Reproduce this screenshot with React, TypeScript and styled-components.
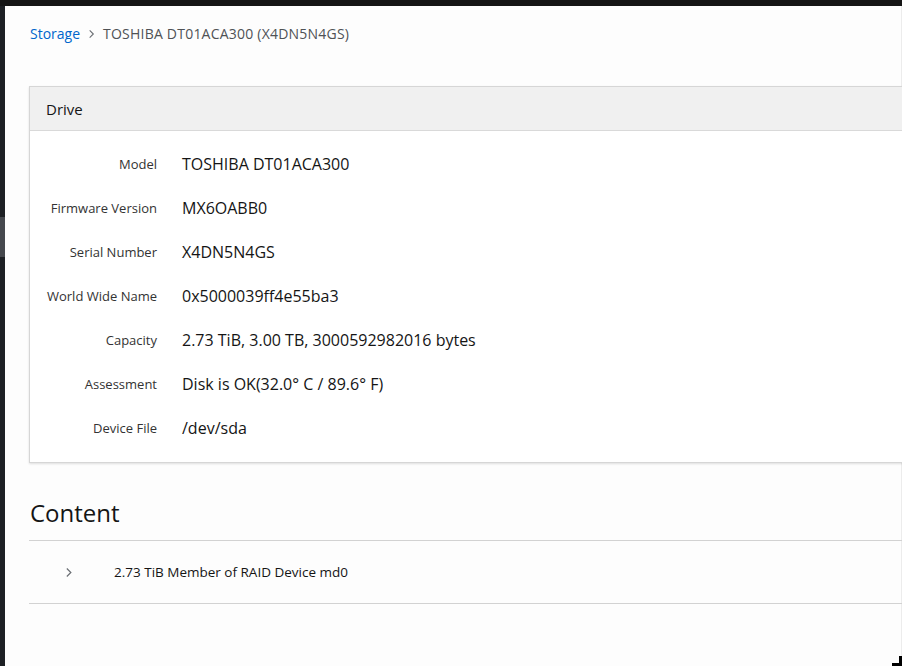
import React from 'react';
import styled, { createGlobalStyle } from 'styled-components';

const GlobalStyle = createGlobalStyle`
  html, body {
    margin: 0;
    padding: 0;
    background: #fdfdfd;
    overflow: hidden;
  }
  body {
    font-family: "Open Sans", "Liberation Sans", sans-serif;
    color: #151515;
  }
`;

// Styled components
const Window = styled.div`
  position: relative;
  width: 902px;
  height: 666px;
  display: flex;
  flex-direction: column;
  overflow: hidden;
`;

const TopStrip = styled.div`
  height: 6px;
  background: #151515;
  flex: none;
`;

const Body = styled.div`
  flex: 1;
  display: flex;
  min-height: 0;
`;

const Rail = styled.div`
  width: 5px;
  flex: none;
  background: #1d2024;
  display: flex;
  flex-direction: column;
  padding-top: 211px;
`;

const RailMark = styled.div`
  height: 40px;
  background: #45484d;
`;

const Main = styled.main`
  flex: 1;
  min-width: 0;
  padding: 17px 0 0 24px;
  border-right: 1px solid #ececec;
`;

const Breadcrumb = styled.nav`
  display: flex;
  align-items: center;
  gap: 8px;
  font-size: 14px;
  line-height: 21px;
  padding-left: 1px;
`;

const CrumbLink = styled.a`
  color: #0066cc;
  text-decoration: none;
`;

const CrumbCurrent = styled.span`
  color: #4f5255;
  letter-spacing: 0.22px;
`;

const CrumbSep = styled.span`
  display: flex;
  color: #6a6e73;
`;

const Card = styled.section`
  margin-top: 42px;
  width: 900px;
  background: #fff;
  border: 1px solid #d6d6d6;
  box-shadow: 0 1px 2px rgba(0, 0, 0, 0.12);
`;

const CardHeader = styled.header`
  height: 43px;
  display: flex;
  align-items: center;
  padding-left: 16px;
  background: #f0f0f0;
  border-bottom: 1px solid #d9d9d9;
  font-size: 15px;
  color: #151515;
`;

const DetailList = styled.dl`
  margin: 0;
  padding: 11px 0 12px;
  display: grid;
  grid-template-columns: 127px 1fr;
  grid-auto-rows: 44px;
  column-gap: 25px;
`;

const Term = styled.dt`
  display: flex;
  align-items: center;
  justify-content: flex-end;
  font-size: 13px;
  color: #333;
`;

const Desc = styled.dd`
  margin: 0;
  display: flex;
  align-items: center;
  font-size: 16px;
  color: #151515;
`;

const SectionTitle = styled.h2`
  margin: 32px 0 0 1px;
  font-size: 24px;
  font-weight: 500;
  line-height: 36px;
  color: #151515;
`;

const ContentTable = styled.div`
  margin-top: 9px;
  width: 900px;
  border-top: 1px solid #d2d2d2;
`;

const ContentRow = styled.div`
  height: 62px;
  display: flex;
  align-items: center;
  border-bottom: 1px solid #d2d2d2;
  font-size: 13.5px;
  color: #151515;
`;

const Toggle = styled.span`
  width: 85px;
  flex: none;
  display: flex;
  padding-left: 36px;
  box-sizing: border-box;
  color: #6a6e73;
`;

const CornerMark = styled.div`
  position: absolute;
  right: 0;
  bottom: 0;
  width: 10px;
  height: 10px;
  border-right: 3px solid #000;
  border-bottom: 3px solid #000;
  box-sizing: border-box;
`;

const Chevron: React.FC<{ size?: number }> = ({ size = 11 }) => (
  <svg width={size * 0.7} height={size} viewBox="0 0 7 11" fill="none">
    <path d="M1.5 1.5 L5.5 5.5 L1.5 9.5" stroke="currentColor" strokeWidth="1.2" />
  </svg>
);

const details: [string, string][] = [
  ['Model', 'TOSHIBA DT01ACA300'],
  ['Firmware Version', 'MX6OABB0'],
  ['Serial Number', 'X4DN5N4GS'],
  ['World Wide Name', '0x5000039ff4e55ba3'],
  ['Capacity', '2.73 TiB, 3.00 TB, 3000592982016 bytes'],
  ['Assessment', 'Disk is OK(32.0° C / 89.6° F)'],
  ['Device File', '/dev/sda'],
];

const App: React.FC = () => (
  <>
    <GlobalStyle />
    <Window>
      <TopStrip />
      <Body>
        <Rail>
          <RailMark />
        </Rail>
        <Main>
          <Breadcrumb>
            <CrumbLink>Storage</CrumbLink>
            <CrumbSep><Chevron size={10} /></CrumbSep>
            <CrumbCurrent>TOSHIBA DT01ACA300 (X4DN5N4GS)</CrumbCurrent>
          </Breadcrumb>

          <Card>
            <CardHeader>Drive</CardHeader>
            <DetailList>
              {details.map(([k, v]) => (
                <React.Fragment key={k}>
                  <Term>{k}</Term>
                  <Desc>{v}</Desc>
                </React.Fragment>
              ))}
            </DetailList>
          </Card>

          <SectionTitle>Content</SectionTitle>
          <ContentTable>
            <ContentRow>
              <Toggle><Chevron /></Toggle>
              <span>2.73 TiB Member of RAID Device md0</span>
            </ContentRow>
          </ContentTable>
        </Main>
      </Body>
      <CornerMark />
    </Window>
  </>
);

export default App;
